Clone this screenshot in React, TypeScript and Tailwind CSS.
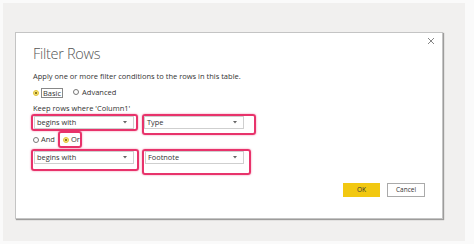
import React from "react";

const font = { fontFamily: '"Open Sans", "Noto Sans", Arial, sans-serif' };

function Radio({ checked }: { checked?: boolean }) {
  return checked ? (
    <span className="inline-flex w-[6px] h-[6px] rounded-full bg-[#f7e27a] border border-[#e3c63a] items-center justify-center">
      <span className="w-[2px] h-[2px] rounded-full bg-[#6b5a00]" />
    </span>
  ) : (
    <span className="inline-block w-[6px] h-[6px] rounded-full border border-[#777] bg-white" />
  );
}

function Select({ label, w }: { label: string; w: string }) {
  return (
    <div className={`${w} h-[13px] bg-white border border-[#cfcfcf] flex items-center justify-between pl-[2px] pr-[6px]`}>
      <span className="text-[7.4px] leading-none text-[#333]">{label}</span>
      <svg width="4" height="3" viewBox="0 0 4 3"><path d="M0 0h4L2 2.5z" fill="#666" /></svg>
    </div>
  );
}

export default function App() {
  return (
    <div className="w-[474px] h-[244px] bg-[#fafafa] overflow-hidden" style={font}>
      <div className="ml-[3px] mt-[3px] w-[462px] h-[238px] bg-[#f1f0ef] pt-[29px] pl-[12px]">
        <div className="relative w-[428px] h-[187px] bg-white border border-[#c4c4c4] shadow-[1px_1px_1px_rgba(0,0,0,0.35)] pl-[17px] pt-[12px]">
          <svg className="absolute right-[7px] top-[4px]" width="8" height="8" viewBox="0 0 8 8">
            <path d="M1 1L7 7M7 1L1 7" stroke="#777" strokeWidth="0.9" />
          </svg>
          <div className="text-[14.5px] leading-[18px] font-light text-[#555] tracking-[-0.3px]">Filter Rows</div>
          <div className="mt-[8px] text-[7.5px] leading-[10px] text-[#333]">
            Apply one or more filter conditions to the rows in this table.
          </div>
          <div className="mt-[7px] flex items-center h-[10px] text-[7.5px] text-[#333]">
            <Radio checked />
            <span className="ml-[2px] border border-[#888] px-[1px] leading-[8px]">Basic</span>
            <span className="ml-[10px]"><Radio /></span>
            <span className="ml-[3px]">Advanced</span>
          </div>
          <div className="mt-[5px] text-[7.5px] leading-[10px] text-[#333]">Keep rows where 'Column1'</div>
          <div className="mt-[1px] ml-[-2px] flex items-start">
            <div className="w-[107px] h-[17px] border-2 border-[#e8336b] rounded-[3px] shadow-[0_0_2px_rgba(232,51,107,0.6)] pl-[1px]">
              <Select label="begins with" w="w-[100px]" />
            </div>
            <div className="ml-[4px] w-[114px] h-[21px] border-2 border-[#e8336b] rounded-[3px] shadow-[0_0_2px_rgba(232,51,107,0.6)]">
              <Select label="Type" w="w-[100px]" />
            </div>
          </div>
          <div className="flex items-center mt-[-4px] text-[7.5px] text-[#333]">
            <Radio />
            <span className="ml-[2px]">And</span>
            <div className="ml-[3px] w-[24px] h-[17px] border-2 border-[#e8336b] rounded-[3px] shadow-[0_0_2px_rgba(232,51,107,0.6)] flex items-center pl-[3px]">
              <Radio checked />
              <span className="ml-[2px]">Or</span>
            </div>
          </div>
          <div className="mt-[1px] ml-[-2px] flex items-start">
            <div className="w-[108px] h-[22px] border-2 border-[#e8336b] rounded-[3px] shadow-[0_0_2px_rgba(232,51,107,0.6)] pl-[1px]">
              <Select label="begins with" w="w-[100px]" />
            </div>
            <div className="ml-[3px] w-[109px] h-[26px] border-2 border-[#e8336b] rounded-[3px] shadow-[0_0_2px_rgba(232,51,107,0.6)] pl-[1px]">
              <Select label="Footnote" w="w-[99px]" />
            </div>
          </div>
          <div className="mt-[8px] pr-[17px] flex justify-end gap-[7px]">
            <div className="w-[37px] h-[14px] bg-[#f2c811] flex items-center justify-center text-[6.5px] text-[#333]">OK</div>
            <div className="w-[38px] h-[14px] bg-white border border-[#aaa] flex items-center justify-center text-[6.5px] text-[#333]">Cancel</div>
          </div>
        </div>
      </div>
    </div>
  );
}
